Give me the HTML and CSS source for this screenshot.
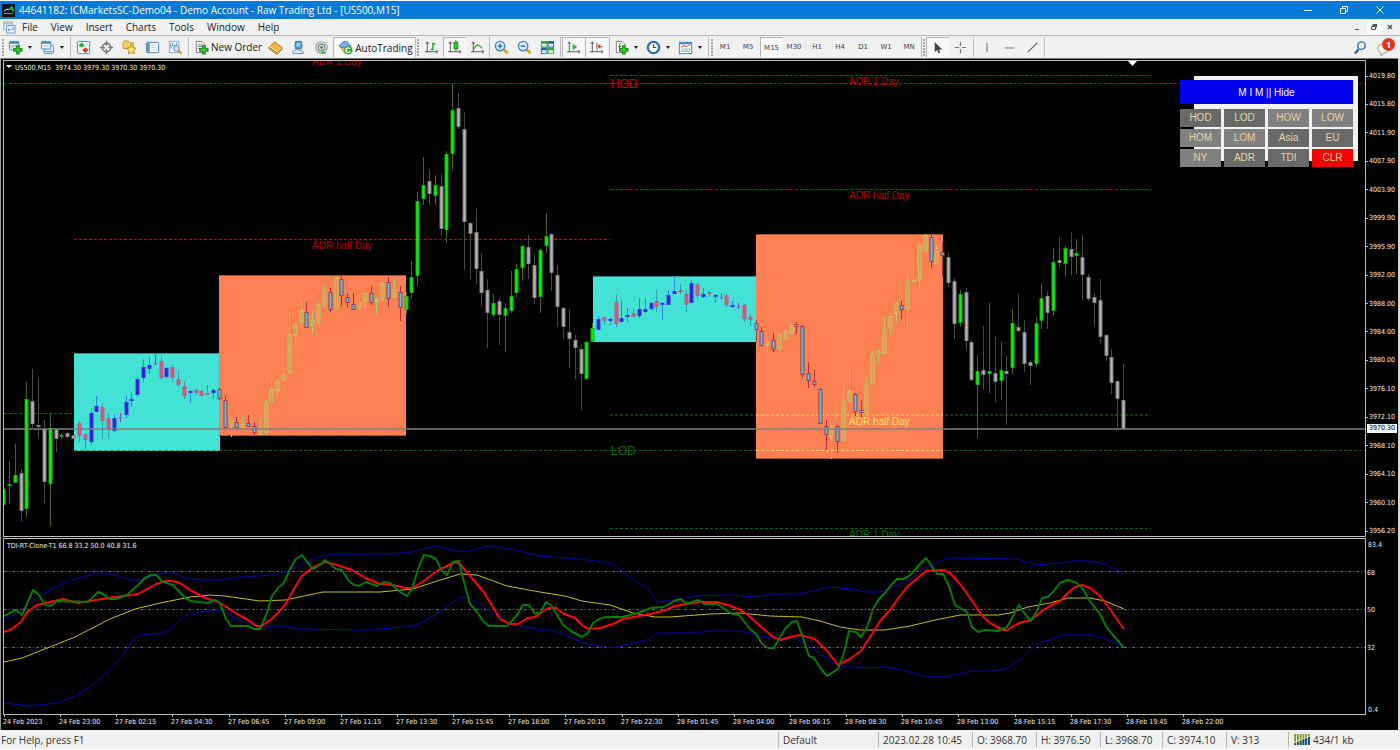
FILE: index.html
```html
<!DOCTYPE html>
<html lang="en">
<head>
<meta charset="utf-8">
<title>44641182: ICMarketsSC-Demo04 - Demo Account</title>
<link rel="stylesheet" href="styles.css">
</head>
<body>
<header class="titlebar">
  <svg class="app-icon" viewBox="0 0 13 13"><rect width="13" height="13" fill="#101418"/><path d="M2 7l3-2 2 1" stroke="#ddd" fill="none"/><path d="M7 5h4v3M8 4l3-1" stroke="#20c040" stroke-width="1.4" fill="none"/><path d="M2 9.500h9" stroke="#888"/></svg>
  <h1>44641182: ICMarketsSC-Demo04 - Demo Account - Raw Trading Ltd - [US500,M15]</h1>
  <button class="win" aria-label="Minimize"><svg viewBox="0 0 10 10"><path d="M1 5.500h8"/></svg></button>
  <button class="win" aria-label="Restore"><svg viewBox="0 0 10 10"><path d="M1.500 3.500h5v5h-5zM3.500 3V1.500h5v5H7"/></svg></button>
  <button class="win" aria-label="Close"><svg viewBox="0 0 10 10"><path d="M1.500 1.500l7 7M8.500 1.500l-7 7"/></svg></button>
</header>
<nav class="menubar">
  <svg class="doc-icon" viewBox="0 0 14 14"><rect x="1" y="1" width="9" height="8" fill="#eaf2fb" stroke="#7aa6cf"/><path d="M1 3h9" stroke="#7aa6cf"/><rect x="4" y="5" width="9" height="8" fill="#f4f9ff" stroke="#5d92c4"/><path d="M6 11V8l2 2 3-3v3" stroke="#5d92c4" fill="none"/></svg>
  <button>File</button><button>View</button><button>Insert</button><button>Charts</button><button>Tools</button><button>Window</button><button>Help</button>
  <span class="spacer"></span>
  <button class="doc" aria-label="Minimize chart"><svg viewBox="0 0 8 8"><path d="M1 6.500h4"/></svg></button>
  <button class="doc boxed" aria-label="Restore chart"><svg viewBox="0 0 8 8"><path d="M1.500 3.500h4v3h-4zM3 3V1.500h4M3 2.500h4M6.500 4.500V2"/></svg></button>
  <button class="doc" aria-label="Close chart"><svg viewBox="0 0 8 8"><path d="M2 2l4 4M6 2L2 6" stroke-width="1.500"/></svg></button>
</nav>
<div class="toolbar" role="toolbar" aria-label="Standard">
  <i class="grip"></i>
  <button class="tool drop" aria-label="New chart"><svg viewBox="0 0 16 16"><rect x="1.500" y="1.500" width="10" height="9" rx="1" fill="#eef6ff" stroke="#4a86bd"/><path d="M1.500 3h10" stroke="#4a86bd" stroke-width="2"/><path d="M3.500 8V6M5.500 8V5M7.500 7V5" stroke="#7aa"/><path d="M9 6h3v3h3v3h-3v3H9v-3H6V9h3z" fill="#35c22c" stroke="#16801a"/></svg></button>
  <button class="tool drop" aria-label="Profiles"><svg viewBox="0 0 16 16"><rect x="4.500" y="5.500" width="10" height="9" rx="1" fill="#dcecfb" stroke="#5b93c7"/><rect x="1.500" y="1.500" width="10" height="8" rx="1" fill="#f2f8ff" stroke="#4a86bd"/><path d="M1.500 3h10" stroke="#4a86bd" stroke-width="2"/><path d="M4 12.500h10" stroke="#5b93c7"/><path d="M3 6.500h7" stroke="#9cc0e0"/></svg></button>
  <i class="sep"></i>
  <button class="tool" aria-label="Market Watch"><svg viewBox="0 0 16 16"><rect x="1.500" y="1.500" width="13" height="13" rx="1" fill="#fff" stroke="#4a86bd"/><path d="M2.500 6L6 2.500 9.500 6 6 8z" fill="#27b12c"/><path d="M6.500 10.500L10 8l3.500 2.500L10 14z" fill="#e03a28"/><path d="M10 4.500h3M3 10.500h2M3 12.500h2" stroke="#a9c6e2"/></svg></button>
  <button class="tool" aria-label="Data Window"><svg viewBox="0 0 16 16"><circle cx="8" cy="8" r="4.500" fill="none" stroke="#777" stroke-width="1.500"/><path d="M8 1v5M8 10v5M1 8h5M10 8h5" stroke="#777" stroke-width="1.500"/></svg></button>
  <button class="tool" aria-label="Navigator"><svg viewBox="0 0 16 16"><path d="M1 3l1.500-2h4L8 3h4v6H1z" fill="#f3cf68" stroke="#c8922a"/><path d="M10 5l1.600 3.200 3.400.6-2.500 2.500.6 3.500L10 13.200l-3.100 1.600.6-3.500L5 8.800l3.400-.6z" fill="#ffe873" stroke="#b98415"/></svg></button>
  <button class="tool" aria-label="Terminal"><svg viewBox="0 0 16 16"><rect x="1.500" y="2.500" width="13" height="11" rx="1" fill="#f5faff" stroke="#3f7fba"/><rect x="2" y="3" width="3" height="10" fill="#5796cf"/><path d="M7 5.500h6M7 8h5M7 10.500h6" stroke="#c9dcef"/></svg></button>
  <button class="tool" aria-label="Strategy Tester"><svg viewBox="0 0 16 16"><rect x="1.500" y="1.500" width="10" height="12" fill="#eff5fc" stroke="#8cb0d3"/><path d="M3 4v5M5 3v4M7 5v5M9 3v4" stroke="#4e86ba"/><circle cx="9" cy="9" r="3" fill="#cfe5f8" fill-opacity=".8" stroke="#5a8cba"/><path d="M11 11l3.500 3.500" stroke="#c7952c" stroke-width="2"/></svg></button>
  <i class="sep"></i>
  <button class="tool wide"><svg viewBox="0 0 16 16"><path d="M2.500 1.500h6l3 3v9h-9z" fill="#fafafa" stroke="#777"/><path d="M4 5h5M4 7h5M4 9h3" stroke="#777"/><path d="M9 6h3v3h3v3h-3v3H9v-3H6V9h3z" fill="#35c22c" stroke="#16801a"/></svg>New Order</button>
  <button class="tool" aria-label="MetaEditor"><svg viewBox="0 0 16 16"><path d="M1 8l6-6 8 6-5 6z" fill="#f0b733" stroke="#a87516"/><path d="M2 7l8 5.500 4-4" stroke="#fff3c0" fill="none"/><path d="M1 8v1.500l9 6 5-6V8" stroke="#a87516" fill="none"/></svg></button>
  <button class="tool" aria-label="Options"><svg viewBox="0 0 16 16"><rect x="4.500" y="1.500" width="7" height="8" rx="1" fill="#4aa3e0" stroke="#2d70a8"/><path d="M6 4h4M6 6h4" stroke="#e4f4ff"/><path d="M2 14.500c-1-2 .5-3.500 2-3 .5-2 4-2 5 0 2-1 4.500.5 4 3z" fill="#e3edf7" stroke="#6e94ba"/></svg></button>
  <button class="tool" aria-label="Signals"><svg viewBox="0 0 16 16"><circle cx="8" cy="8" r="6" fill="none" stroke="#9aa7b0" stroke-width="1.500"/><circle cx="8" cy="8" r="3.500" fill="none" stroke="#7e8c96" stroke-width="1.500"/><circle cx="8" cy="8" r="1.500" fill="#3f8f3a"/><path d="M8 9l5 6H8z" fill="#4ab244"/></svg></button>
  <button class="tool wide pressed"><svg viewBox="0 0 16 16"><path d="M2 7l6 8 6-6z" fill="#f1c748" stroke="#b98c1d"/><path d="M1 6c2-1 3-1 3-3 2-2 6-2 7 0 0 2 1 2 3 3-2 3-11 3-13 0z" fill="#6db4e6" stroke="#3a7eb5"/><circle cx="11" cy="11" r="4.500" fill="#2faa35"/><path d="M13 9.500a2.500 2.500 0 1 0 .2 2.500" stroke="#fff" stroke-width="1.500" fill="none"/></svg>AutoTrading</button>
  <i class="sep tight"></i><i class="grip"></i>
  <button class="tool" aria-label="Bar chart"><svg viewBox="0 0 16 16"><path class="ax" d="M3.500 2v11M1 12.500h13M2 4l1.500-2L5 4M13 11l2 1.500-2 1.500"/><path d="M9.500 3v8M7 10h2.500M9.500 4H12" stroke="#2a9a2a" stroke-width="1.500" fill="none"/></svg></button>
  <button class="tool pressed" aria-label="Candlesticks"><svg viewBox="0 0 16 16"><path class="ax" d="M3.500 2v11M1 12.500h13M2 4l1.500-2L5 4M13 11l2 1.500-2 1.500"/><path d="M9.500 0v12" stroke="#178a17"/><rect x="7.500" y="2.500" width="4" height="7" fill="#25d525" stroke="#178a17"/></svg></button>
  <button class="tool" aria-label="Line chart"><svg viewBox="0 0 16 16"><path class="ax" d="M3.500 2v11M1 12.500h13M2 4l1.500-2L5 4M13 11l2 1.500-2 1.500"/><path d="M4 10c3-6 5-6 9-1" stroke="#3c9a3c" stroke-width="1.300" fill="none"/></svg></button>
  <i class="sep tight"></i>
  <button class="tool" aria-label="Zoom In"><svg viewBox="0 0 16 16"><path d="M9.500 9.500L14.500 14" stroke="#d8a72e" stroke-width="3"/><circle cx="6.500" cy="6.500" r="5" fill="#d5ebfc" stroke="#3e83c4" stroke-width="1.500"/><path d="M4 6.500h5M6.500 4v5" stroke="#2a6db3" stroke-width="1.500"/></svg></button>
  <button class="tool" aria-label="Zoom Out"><svg viewBox="0 0 16 16"><path d="M9.500 9.500L14.500 14" stroke="#d8a72e" stroke-width="3"/><circle cx="6.500" cy="6.500" r="5" fill="#d5ebfc" stroke="#3e83c4" stroke-width="1.500"/><path d="M4 6.500h5" stroke="#2a6db3" stroke-width="1.500"/></svg></button>
  <button class="tool" aria-label="Tile Windows"><svg viewBox="0 0 16 16"><path d="M1 1h7v7H1zM8 8h7v7H8z" fill="#3cab30"/><path d="M8 1h7v7H8zM1 8h7v7H1z" fill="#2d62b8"/><path d="M2 4h5v3H2zM9 4h5v3H9zM2 11h5v3H2zM9 11h5v3H9z" fill="#e2f0fa"/></svg></button>
  <i class="sep"></i>
  <button class="tool pressed" aria-label="Auto Scroll"><svg viewBox="0 0 16 16"><path class="ax" d="M3.500 2v11M1 12.500h13M2 4l1.500-2L5 4M13 11l2 1.500-2 1.500"/><path d="M7 4l5 3.500L7 11z" fill="#2fb52f"/></svg></button>
  <button class="tool pressed" aria-label="Chart Shift"><svg viewBox="0 0 16 16"><path class="ax" d="M3.500 2v11M1 12.500h13M2 4l1.500-2L5 4M13 11l2 1.500-2 1.500M8.500 3v8"/><path d="M14 7H10M12 5l-2 2 2 2" stroke="#d8452d" stroke-width="1.300" fill="none"/></svg></button>
  <i class="sep"></i>
  <button class="tool drop" aria-label="Indicators"><svg viewBox="0 0 16 16"><path d="M2.500 1.500h6l3 3v9h-9z" fill="#fafafa" stroke="#777"/><path d="M8 4c-2-1-2 1-2 3v4M4.500 7H8" stroke="#555" fill="none"/><path d="M9 6h3v3h3v3h-3v3H9v-3H6V9h3z" fill="#35c22c" stroke="#16801a"/></svg></button>
  <button class="tool drop" aria-label="Periods"><svg viewBox="0 0 16 16"><circle cx="8" cy="8" r="6" fill="#fff" stroke="#2c70b8" stroke-width="2.500"/><path d="M8 4.500V8h3" stroke="#444" fill="none" stroke-width="1.300"/></svg></button>
  <button class="tool drop" aria-label="Templates"><svg viewBox="0 0 16 16"><rect x="1.500" y="2.500" width="13" height="12" fill="#fff" stroke="#4a86bd"/><path d="M1.500 3.500h13" stroke="#4a86bd" stroke-width="2"/><path d="M3 8l3-2 3 1 4-2" stroke="#c04020" fill="none"/><path d="M3 9.500h10" stroke="#9cc0e0"/><path d="M3 12.500l2-1.500 2 1.500 2-1.500 2 1.500 2-2" stroke="#2a9a2a" fill="none"/></svg></button>
  <i class="sep"></i><i class="grip"></i>
  <button class="tool tf">M1</button><button class="tool tf">M5</button><button class="tool tf pressed">M15</button><button class="tool tf">M30</button><button class="tool tf">H1</button><button class="tool tf">H4</button><button class="tool tf">D1</button><button class="tool tf">W1</button><button class="tool tf">MN</button>
  <i class="sep tight"></i><i class="grip"></i>
  <button class="tool pressed" aria-label="Cursor"><svg viewBox="0 0 16 16"><path d="M5 2v11l2.500-2.500L9 14l2-1-1.500-3H13z" fill="#444"/></svg></button>
  <button class="tool" aria-label="Crosshair"><svg viewBox="0 0 16 16"><path d="M8 2v4.500M8 9.500V14M2 8h4.500M9.500 8H14" stroke="#777" stroke-width="1.300"/></svg></button>
  <i class="sep"></i>
  <button class="tool" aria-label="Vertical line"><svg viewBox="0 0 16 16"><path d="M8.500 3v10" stroke="#666"/></svg></button>
  <button class="tool" aria-label="Horizontal line"><svg viewBox="0 0 16 16"><path d="M3 8.500h10" stroke="#666"/></svg></button>
  <button class="tool" aria-label="Trendline"><svg viewBox="0 0 16 16"><path d="M3 13L13 3" stroke="#666" stroke-width="1.300"/></svg></button>
  <i class="sep tight"></i>
  <span class="spacer"></span>
  <button class="tool" aria-label="Search"><svg viewBox="0 0 16 16"><path d="M6 10l-4 4.500" stroke="#2f5fae" stroke-width="2.500"/><circle cx="9" cy="6" r="4" fill="#e8f1fb" stroke="#3a6db5" stroke-width="1.500"/></svg></button>
  <button class="tool notify" aria-label="Notifications"><svg viewBox="0 0 22 20"><path d="M3 11c0-3 3-4 6-4s6 2 6 4-3 5-6 5l-3 3v-3c-2-1-3-3-3-5z" fill="#f4f4f4" stroke="#999"/></svg><b class="badge">1</b></button>
</div>

<main class="workspace">
  <section class="pane price-pane" aria-label="US500 M15 price">
    <svg class="plot" id="price">
      <defs>
        <pattern id="dotsA" width="8" height="6" patternUnits="userSpaceOnUse"><rect width="8" height="6" fill="#45e3d5"/><path d="M1 1h1v1H1zM5 4h1v1H5z" fill="#38ccc6"/></pattern>
        <pattern id="dotsN" width="6" height="6" patternUnits="userSpaceOnUse"><rect width="6" height="6" fill="#fd8054"/><path d="M1 1h1v1H1zM4 4h1v1H4z" fill="#f68858"/></pattern>
      </defs>
      <g transform="translate(-4 -61)">
        <g class="dash red">
          <path d="M4 83.500H4000M610 75.500H1151M610 189.500H1151M74 239.500H610"/>
        </g>
        <g class="dash green">
          <path d="M4 413.500H73M74 450.500H4000M610 528.500H1151"/>
          <path class="dim" d="M610 415H1151"/>
        </g>
        <rect x="74" y="353" width="146" height="98" fill="url(#dotsA)"/>
        <rect x="593" y="276" width="163" height="66" fill="url(#dotsA)"/>
        <path d="M74 353.500H220M593 276.500H756" stroke="#308c8c"/>
        <path d="M74 450.500H220" stroke="#30a030" stroke-dasharray="4 2"/>
        <rect x="219" y="275" width="187" height="161" fill="url(#dotsN)"/>
        <rect x="756" y="234" width="187" height="225" fill="url(#dotsN)"/>
        <path d="M219 275.500H406M219 435.500H406M756 234.500H943M756 458.500H943" stroke="#a85030"/>
        <g class="dash yellow"><path d="M756 415H943M756 450.500H943"/></g>
        <g class="obj red-t"><text x="312" y="65">ADR 1 Day</text><text x="849" y="85">ADR 1 Day</text><text x="849" y="199">ADR half Day</text><text x="312" y="249">ADR half Day</text><text class="big" x="611" y="88">HOD</text></g>
        <g class="obj green-t"><text class="big" x="611" y="455">LOD</text><text x="849" y="538">ADR 1 Day</text></g>
        <g id="candles"></g>
        <g class="obj yellow-t"><text x="849" y="425">ADR half Day</text></g>
        <path d="M4 429H4000" stroke="#808080" stroke-width="1.500"/>
        <path d="M1128 61h9l-4.500 5z" fill="#fff"/>
        <path d="M6 65h6l-3 3z" fill="#fff"/>
        <text class="label" x="15" y="70" xml:space="preserve">US500,M15  3974.30 3979.30 3970.30 3970.30</text>
      </g>
    </svg>
    <div class="mim">
      <button class="head">M I M || Hide</button>
      <div class="keys">
        <button>HOD</button><button>LOD</button><button class="lit">HOW</button><button class="lit">LOW</button>
        <button class="lit">HOM</button><button class="lit">LOM</button><button>Asia</button><button>EU</button>
        <button class="lit">NY</button><button>ADR</button><button>TDI</button><button class="clr">CLR</button>
      </div>
    </div>
  </section>
  <aside class="scale">
    <ol>
      <li>4019.80</li><li>4015.80</li><li>4011.90</li><li>4007.90</li><li>4003.90</li><li>3999.90</li><li>3995.90</li><li>3992.00</li><li>3988.00</li><li>3984.00</li><li>3980.00</li><li>3976.10</li><li>3972.10</li><li>3968.10</li><li>3964.10</li><li>3960.10</li><li>3956.20</li>
    </ol>
    <span class="bid">3970.30</span>
  </aside>
  <section class="pane" aria-label="TDI indicator">
    <svg class="plot">
      <g transform="translate(-4 -539)">
        <path d="M4 571.500H4000M4 609.500H4000M4 647.500H4000" stroke="#6c6c6c" stroke-dasharray="3 2 1 2"/>
        <polyline class="tdi band" points="4,620 22,610 38,597 55,587 72,580 97,573 115,575 133,581 145,579 160,574 172,572 185,578 200,580 220,580 240,577 275,575 288,571 303,563 325,555 350,554 385,554 413,552 423,549 437,546 460,552 470,551 489,546 510,549 540,556 580,559 610,563 622,571 633,580 645,586 658,602 670,601 695,596 730,595 755,597 775,594 800,594 830,587 850,589 865,592 880,592 900,584 915,577 925,568 945,559 960,558 1015,559 1038,565 1060,563 1080,560 1100,563 1112,567 1124,574"/>
        <polyline class="tdi band" points="4,703 28,706 58,703 75,696 98,681 110,670 123,655 132,641 140,635 163,633 170,630 185,616 200,612 220,610 235,618 255,626 280,626 300,629 370,630 413,626 425,621 443,610 459,598 470,598 485,608 505,622 520,626 535,629 550,630 565,635 583,643 600,646 612,648 633,643 645,641 658,633 690,633 710,631 742,631 760,636 780,639 797,639 808,645 825,658 840,666 863,668 885,667 910,672 925,677 945,677 972,671 995,671 1007,668 1020,660 1037,644 1050,640 1063,635 1090,635 1105,639 1124,647"/>
        <polyline class="tdi mid" points="4,662 22,658 50,647 75,637 110,619 135,609 160,603 190,597 210,595 225,596 260,601 285,600 323,592 380,592 413,589 437,581 460,574 477,575 507,586 540,592 565,596 582,601 610,605 633,613 655,617 670,617 710,614 740,613 770,616 802,617 820,621 840,627 860,630 885,630 910,626 935,620 960,615 998,615 1010,613 1028,607 1050,603 1068,598 1090,598 1105,601 1124,609"/>
        <polyline class="tdi signal" points="4,632 10,630 21,622 27,612 37,605 50,602 63,599 78,603 90,601 102,599 115,597 138,594 156,584 165,581 172,581 180,583 190,590 205,598 218,602 228,608 237,614 248,620 256,626 262,626 273,618 285,605 295,587 302,576 312,568 325,562 337,565 352,570 365,578 380,584 393,585 405,588 413,588 425,580 437,571 447,566 455,562 460,564 470,576 483,591 491,604 500,619 510,624 518,624 528,618 535,617 548,608 556,608 564,614 575,618 583,626 589,629 600,628 613,624 623,619 650,614 663,611 675,606 687,604 700,602 715,602 728,605 740,610 748,615 760,626 773,637 781,640 790,637 800,635 815,639 827,651 838,665 850,659 861,651 872,634 880,621 890,610 897,600 907,587 920,576 926,571 943,570 950,573 960,584 970,598 983,617 990,623 1003,630 1007,630 1019,623 1031,620 1042,611 1050,606 1060,601 1068,593 1075,587 1082,585 1090,588 1100,596 1110,609 1118,621 1124,629"/>
        <polyline class="tdi rsi" points="4,616 16,610 22,615 33,590 39,595 45,605 51,606 57,601 88,602 98,592 103,594 109,599 116,599 127,595 138,585 145,578 151,575 156,575 163,582 173,585 185,598 191,601 208,603 215,600 220,603 226,619 231,626 248,626 254,629 260,629 267,613 272,596 278,588 284,583 290,569 296,559 302,555 307,562 313,569 320,565 325,560 336,569 342,570 348,580 354,585 359,586 366,582 377,586 384,582 390,583 400,592 407,596 412,589 418,569 424,555 430,556 436,559 442,571 447,575 453,562 459,561 463,578 470,604 477,612 483,621 489,626 507,626 517,615 523,605 529,605 535,614 541,612 546,602 552,606 563,625 571,631 582,637 588,633 593,623 599,619 606,617 622,617 638,613 651,608 664,607 674,601 681,599 687,604 698,600 704,604 717,604 732,614 739,615 750,629 756,634 762,644 768,648 774,648 779,639 785,629 792,622 797,621 803,638 809,656 814,658 821,669 827,676 838,669 844,653 849,631 856,632 861,637 867,627 873,609 879,599 885,593 891,585 897,579 903,579 909,576 914,571 920,564 926,558 931,565 937,574 943,574 949,586 955,605 967,612 972,627 978,632 985,630 997,631 1007,627 1013,616 1019,605 1025,614 1031,621 1037,611 1042,598 1048,597 1053,592 1060,583 1068,580 1077,583 1083,589 1089,600 1100,614 1106,626 1112,634 1119,642 1124,648"/>
        <text class="label" x="7" y="548">TDI-RT-Clone-T1 66.8 33.2 50.0 40.8 31.6</text>
      </g>
    </svg>
  </section>
  <aside class="scale">
    <svg class="plot"><g class="label"><text x="2" y="9">83.4</text><text x="1" y="37">68</text><text x="1" y="74">50</text><text x="1" y="112">32</text><text x="2" y="174">0.4</text></g></svg>
  </aside>
  <svg class="time-axis" id="times"></svg>
</main>

<footer class="status">
  <span class="help">For Help, press F1</span>
  <span class="c100">Default</span><span class="c94">2023.02.28 10:45</span><span class="c64">O: 3968.70</span><span class="c64">H: 3976.50</span><span class="c62">L: 3968.70</span><span class="c64">C: 3974.10</span><span class="c62">V: 313</span>
  <span class="c112"><svg viewBox="0 0 18 12"><path d="M1.500 0v12M4.500 0v12M7.500 0v12M10.500 0v12M13.500 0v12M16.500 0v12" stroke="#7d9a24" stroke-width="2"/><path d="M1.500 10v2M4.500 8.500V12M7.500 7v5M10.500 5.500V12M13.500 4v8M16.500 3v9" stroke="#164a78" stroke-width="2"/><path d="M0 9.500L18 2" stroke="#e8f0d0"/></svg>434/1 kb</span>
</footer>
<script src="chart.js"></script>
</body>
</html>
```
FILE: styles.css
```css
* { box-sizing: border-box; }
body { margin: 0; height: 100vh; display: flex; flex-direction: column; overflow: hidden; background: #f1f1f1; color: #222; font: 10px/16px "Open Sans", "Noto Sans", sans-serif; }
button { margin: 0; padding: 0; border: 0; background: none; font: inherit; color: inherit; }
.spacer { flex: 1; }

.titlebar { flex: none; display: flex; align-items: center; height: 19px; border-top: 1px solid #fff; background: #0479d5; color: #fff; padding: 0 2px; }
.titlebar h1 { flex: 1; margin: 0 0 0 4px; font-size: 10px; font-weight: 400; line-height: 18px; white-space: nowrap; }
.app-icon { width: 13px; height: 13px; }
.win { width: 36px; height: 18px; display: flex; justify-content: center; align-items: center; }
.win svg { width: 10px; height: 10px; fill: none; stroke: #fff; }

.menubar { flex: none; display: flex; align-items: center; height: 17px; padding: 0 1px 0 3px; border-bottom: 1px solid #b8b8b8; }
.menubar button { padding: 0 6px; margin-right: 1px; }
.doc-icon { width: 13px; height: 13px; }
.menubar .doc { width: 15px; padding: 0 3px; height: 15px; display: flex; align-items: center; }
.menubar .boxed { background: #fafafa; }
.doc svg { width: 8px; height: 8px; fill: none; stroke: #555; }

.toolbar { flex: none; display: flex; align-items: center; height: 22px; padding-left: 1px; }
.tool { flex: none; width: 23px; height: 20px; display: flex; justify-content: center; align-items: center; white-space: nowrap; }
.tool svg { flex: none; width: 15px; height: 15px; }
.ax { fill: none; stroke: #555; }
.drop { width: 32px; justify-content: flex-start; padding-left: 3px; gap: 3px; }
.drop::after { content: ""; margin-left: 2px; border: 2px solid transparent; border-top: 3px solid #222; border-bottom: 0; }
.wide { width: auto; gap: 2px; padding: 0 2px 0 4px; }
.pressed { background: #f8f8f8; border-top: 1px solid #b4b4b4; border-left: 1px solid #b4b4b4; }
.tf { font: 7px/10px "DejaVu Sans", sans-serif; color: #444; }
.sep { flex: none; width: 1px; height: 20px; margin: 0 1px; background: #bbb; }
.sep.tight { margin: 0; }
.grip { flex: none; width: 2px; height: 17px; margin: 0 1px; background: repeating-linear-gradient(#a8a8a8 0 2px, #f1f1f1 2px 3px); }
.notify { position: relative; width: 28px; }
.notify svg { width: 22px; height: 20px; }
.badge { position: absolute; right: 5px; top: 1px; width: 13px; height: 13px; border-radius: 50%; background: #e0351b; color: #fff; font-size: 9px; line-height: 13px; }

.workspace { flex: 1; min-height: 0; display: grid; grid-template-columns: 1fr 32px; grid-template-rows: 1fr 177px 15px; padding: 2px 0 0 2px; border-left: 1px solid #999; border-right: 2px solid #d8d8d8; background: #000; box-shadow: inset 0 1px #777; }
.pane { position: relative; min-height: 0; overflow: hidden; border: 1px solid #bdbdbd; margin-bottom: 1px; }
.pane + .scale + .pane { margin: 0; }
.plot { display: block; width: 100%; height: 100%; }
.label, .scale, .time-axis { font: 7px/10px "DejaVu Sans Condensed", "DejaVu Sans", sans-serif; color: #f0f0f0; fill: #f0f0f0; }
.time-axis { grid-column: 1 / -1; width: 100%; height: 15px; }
.scale { position: relative; min-height: 0; }
.scale ol { height: 100%; margin: 0; padding: 11px 0 2px; list-style: none; display: flex; flex-direction: column; justify-content: space-between; }
.scale li { display: flex; align-items: center; gap: 1px; }
.scale li::before { content: ""; width: 2px; height: 1px; background: #bdbdbd; }
.bid { position: absolute; left: 1px; top: 364px; width: 30px; padding-left: 2px; line-height: 9px; background: #f4f4f4; color: #000; }

.dash { fill: none; stroke-dasharray: 3 2; }
.red { stroke: #c40808; }
.green { stroke: #066a06; }
.dim { stroke: #0b3a10; stroke-width: 2; }
.yellow { stroke: #ffd850; }
.obj { font: 10px "Liberation Sans", Arial, sans-serif; }
.big { font-size: 12px; }
.red-t { fill: #c00000; }
.green-t { fill: #067006; }
.yellow-t { fill: #ffe45a; }
.up .wick { fill: #4a6a08; } .up .body { fill: #08f808; stroke: #14a80a; }
.down .wick { fill: #4a4a46; } .down .body { fill: #b4b4b4; stroke: #7c7c78; }
.asia-up .wick { fill: #2a86e0; } .asia-up .body { fill: #3418dc; stroke: #3a38e4; }
.asia-down .wick { fill: #2fa0b0; } .asia-down .body { fill: #f04a78; stroke: #a8688c; }
.asia-doji .wick, .asia-doji .body { fill: #9040d0; }
.ny-up .wick { fill: #b8c860; } .ny-up .body { fill: #f09058; stroke: #b4cc62; }
.ny-down .wick { fill: #b03040; } .ny-down .body { fill: #4cc8ea; stroke: #9c3a52; }
.tdi { fill: none; stroke-linejoin: round; }
.band { stroke: #0606b4; }
.mid { stroke: #c4c010; }
.signal { stroke: #fa0808; stroke-width: 2; }
.rsi { stroke: #087c08; stroke-width: 2; }

.mim { position: absolute; top: 15px; right: 7px; width: 178px; padding: 4px 5px 0 0; font: 10px/12px "Liberation Sans", Arial, sans-serif; background: linear-gradient(#f2f2f2, #f2f2f2) right top / 164px 85px no-repeat; }
.mim .head { display: block; width: 173px; height: 24px; padding-top: 2px; background: #0000ee; color: #fff; }
.keys { display: grid; grid-template-columns: repeat(4, 41px); gap: 2px 3px; margin-top: 5px; }
.keys button { height: 18px; background: #696969; color: #e8d3a4; }
.keys .lit { background: #808080; }
.keys .clr { background: #f80000; }

.status { flex: none; display: flex; align-items: center; height: 20px; border-bottom: 1px solid #fff; color: #333; white-space: nowrap; }
.status span { padding-left: 4px; border-left: 1px solid #b4b4b4; height: 15px; line-height: 17px; }
.status .help { flex: 1; border: 0; padding-left: 1px; }
.status svg { width: 18px; height: 11px; margin-right: 2px; vertical-align: -1px; }
.c100 { width: 100px; } .c94 { width: 94px; } .c64 { width: 64px; } .c62 { width: 62px; } .c112 { width: 112px; }
```
FILE: chart.js
```js
// direction, high, body top, body bottom, low
const bars = `u467 489 505 513|u461 484 486 503|u444 475 483 483|d469 473 511 521|u382 399 509 517|d369 401 424 427|d378 425 427 438|d420 429 482 503|u414 428 484 526|d429 429 439 452|u433 435 437 439|d432 433 437 439|d435 435 439 439|d421 423 436 442|d433 434 440 450|u408 413 442 445|u396 406 412 412|d403 407 421 439|d413 418 430 439|u414 418 431 432|m413 417 418 422|u396 402 415 418|u392 399 400 407|u377 379 395 397|u359 367 378 382|u357 365 369 374|m354 363 364 365|d357 361 378 380|u367 368 377 378|d365 367 378 382|d371 379 385 386|d381 386 396 399|u390 391 393 403|d389 390 393 395|d390 391 396 396|d385 393 395 395|u389 390 393 399|d388 389 399 400|d395 400 428 429|u420 420 426 437|d417 422 428 428|u415 424 427 429|d415 423 427 427|d422 426 433 436|u418 428 435 435|u399 402 433 435|u379 389 402 402|u378 381 391 397|u368 374 380 382|u311 334 373 373|u321 324 335 346|u299 310 322 329|d302 312 328 328|u310 320 326 334|u302 304 322 324|u284 289 303 308|d288 292 310 312|u277 278 310 310|d275 279 296 306|d293 297 303 308|d293 304 310 310|u295 302 308 311|u293 293 301 310|d286 293 303 305|u297 300 301 314|u282 284 299 300|d277 282 299 307|u278 289 297 298|d286 292 308 321|u292 296 310 314|u261 277 293 299|u192 201 276 286|u157 185 199 205|d170 181 194 205|u175 185 196 205|d174 186 229 236|u151 154 230 243|u84 110 154 170|d93 108 127 129|d112 129 222 270|d222 223 234 279|d208 232 269 284|d254 271 293 306|d279 290 313 348|u294 303 315 317|d298 301 315 345|u303 308 316 352|u271 296 311 313|u264 269 293 298|u245 246 268 281|d235 247 264 279|d254 265 298 304|u249 250 297 313|u213 236 246 253|d233 234 273 291|d265 275 307 327|d307 308 327 339|d310 332 339 368|d335 340 348 379|d345 349 374 410|u341 342 379 380|u323 328 342 342|u316 319 330 330|d317 317 321 325|u317 319 320 325|d294 302 324 327|u300 318 322 322|u308 315 317 322|d309 313 317 317|u298 309 316 318|u299 309 312 313|u302 303 309 310|d290 301 307 312|u302 303 305 320|u290 295 305 305|u277 291 294 294|d284 290 292 294|d290 294 305 312|u280 283 303 303|d283 284 296 299|u288 294 297 298|d290 292 294 297|u294 295 296 303|m293 297 298 299|d294 295 305 307|u301 305 307 308|m303 306 307 309|d304 305 319 322|d313 317 320 326|d320 323 330 342|d327 331 346 347|u340 342 345 352|d333 340 350 352|u333 334 349 352|u327 331 339 339|u323 326 334 334|d322 324 327 334|d325 326 375 378|d362 373 381 388|d370 381 385 387|d388 389 424 424|d420 426 435 450|u423 426 437 459|d425 426 442 453|u384 401 441 441|u369 391 402 402|d393 394 412 416|d400 410 413 420|u377 385 413 415|u351 354 384 385|u349 351 354 364|u317 329 353 354|u313 316 328 334|u302 303 314 323|d301 305 310 319|u274 281 309 328|u263 280 281 281|u243 245 280 289|u234 235 252 252|d234 237 262 268|u245 251 264 264|d242 252 256 277|d253 257 283 287|d278 281 324 339|u290 294 323 327|d288 292 341 350|d340 342 380 381|u355 371 385 438|d326 370 375 390|u303 371 374 393|d337 373 382 402|u342 370 381 400|d356 371 374 425|u309 323 368 374|d294 327 331 332|d320 332 364 372|d360 362 366 385|u317 323 364 367|u283 298 321 329|d291 296 313 329|u248 262 311 315|d237 260 263 267|u246 248 264 276|d232 249 257 275|u239 253 256 274|d235 257 275 300|d274 277 299 301|d293 297 303 326|d279 300 337 344|d334 335 356 361|d349 357 383 394|d381 381 399 427|d364 400 429 429`.split("|");

const sessions = [["asia", 13, 36], ["ny", 37, 68], ["asia", 102, 128], ["ny", 129, 161]];
const kinds = { u: "up", d: "down", m: "doji" };
const NS = "http://www.w3.org/2000/svg";

function add(parent, name, attrs, text) {
  const el = document.createElementNS(NS, name);
  for (const key in attrs) el.setAttribute(key, attrs[key]);
  if (text) el.textContent = text;
  parent.appendChild(el);
  return el;
}

const layer = document.getElementById("candles");
bars.forEach((bar, i) => {
  const [high, top, bottom, low] = bar.slice(1).split(" ").map(Number);
  const session = sessions.find(s => i >= s[1] && i <= s[2]);
  const x = Math.round(4 + i * 1120 / 192) - 1;
  const g = add(layer, "g", { class: (session ? session[0] + "-" : "") + kinds[bar[0]] });
  add(g, "rect", { class: "wick", x: x, y: high, width: 1, height: Math.max(low - high, 1) });
  add(g, "rect", { class: "body", x: x - 1, y: top + 0.5, width: 3, height: Math.max(bottom - top - 1, 1) });
});

const labels = ["24 Feb 2023", "24 Feb 23:00", "27 Feb 02:15", "27 Feb 04:30", "27 Feb 06:45", "27 Feb 09:00", "27 Feb 11:15", "27 Feb 13:30", "27 Feb 15:45", "27 Feb 18:00", "27 Feb 20:15", "27 Feb 22:30", "28 Feb 01:45", "28 Feb 04:00", "28 Feb 06:15", "28 Feb 08:30", "28 Feb 10:45", "28 Feb 13:00", "28 Feb 15:15", "28 Feb 17:30", "28 Feb 19:45", "28 Feb 22:00"];
const times = document.getElementById("times");
labels.forEach((label, i) => {
  const x = Math.round(i * 1179 / 21);
  add(times, "rect", { x: x + 1, y: 0, width: 1, height: 2, fill: "#bdbdbd" });
  add(times, "text", { x: x, y: 9 }, label);
});
```
